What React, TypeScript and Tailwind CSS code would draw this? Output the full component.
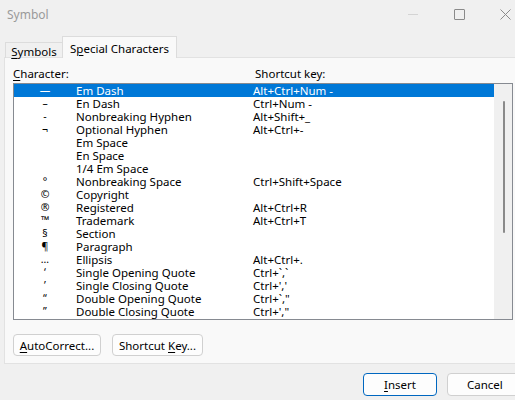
import React from 'react';

const rows: [string, string, string][] = [
    ['—', 'Em Dash', 'Alt+Ctrl+Num -'],
    ['–', 'En Dash', 'Ctrl+Num -'],
    ['-', 'Nonbreaking Hyphen', 'Alt+Shift+_'],
    ['¬', 'Optional Hyphen', 'Alt+Ctrl+-'],
    ['', 'Em Space', ''],
    ['', 'En Space', ''],
    ['', '1/4 Em Space', ''],
    ['°', 'Nonbreaking Space', 'Ctrl+Shift+Space'],
    ['©', 'Copyright', ''],
    ['®', 'Registered', 'Alt+Ctrl+R'],
    ['™', 'Trademark', 'Alt+Ctrl+T'],
    ['§', 'Section', ''],
    ['¶', 'Paragraph', ''],
    ['…', 'Ellipsis', 'Alt+Ctrl+.'],
    ['‘', 'Single Opening Quote', 'Ctrl+`,`'],
    ['’', 'Single Closing Quote', "Ctrl+','"],
    ['“', 'Double Opening Quote', 'Ctrl+`,"'],
    ['”', 'Double Closing Quote', "Ctrl+',\""],
];

const App = () => {
    return (
        <div className="w-[515px] h-[400px] overflow-hidden bg-[#f0f0f0] font-['Noto_Sans',sans-serif] text-[11.5px] leading-[13px] text-black select-none">
            {/* title bar */}
            <div className="h-[32px] flex items-center pl-[7px]">
                <span className="text-[#9a9a9a] text-[12px] -mt-[3px]">Symbol</span>
                <div className="ml-auto -mr-[13px] flex items-center -mt-[3px]">
                    <div className="w-[46px] flex justify-center">
                        <div className="w-[10px] h-px bg-[#d4d4d4]" />
                    </div>
                    <div className="w-[46px] flex justify-center">
                        <div className="w-[11px] h-[11px] border border-[#8a8a8a] rounded-[1px]" />
                    </div>
                    <div className="w-[46px] flex justify-center">
                        <svg width="11" height="11" viewBox="0 0 11 11" className="stroke-[#8a8a8a]">
                            <path d="M0.5 0.5L10.5 10.5M10.5 0.5L0.5 10.5" strokeWidth="1" />
                        </svg>
                    </div>
                </div>
            </div>

            {/* tabs */}
            <div className="h-[26px] flex items-end pl-[5px] relative z-10">
                <div className="h-[16px] w-[58px] border border-b-0 border-[#dcdcdc] flex items-center justify-center pt-px">
                    <span><span className="underline underline-offset-2">S</span>ymbols</span>
                </div>
                <div className="h-[22px] w-[115px] -ml-px border border-b-0 border-[#dcdcdc] bg-[#f9f9f9] flex items-center justify-center pt-[2px]">
                    <span>S<span className="underline underline-offset-2">p</span>ecial Characters</span>
                </div>
            </div>

            {/* panel */}
            <div className="ml-[4px] w-[530px] h-[307px] -mt-px border border-[#e2e2e2] bg-[#f9f9f9] pl-[8px] pt-[8px]">
                <div className="flex h-[14px] items-center w-[500px]">
                    <span className="w-[242px]"><span className="underline underline-offset-2">C</span>haracter:</span>
                    <span>Shortcut key:</span>
                </div>
                <div className="mt-[3px] w-[500px] h-[237px] border border-[#868a91] bg-white flex">
                    <div className="flex-1 flex flex-col">
                        {rows.map(([sym, name, key], i) => (
                            <div
                                key={name}
                                className={`h-[13px] flex items-center ${i === 0 ? 'bg-[#0078d7] text-white' : ''}`}
                            >
                                <span className="w-[62px] text-center text-[10.5px]">{sym}</span>
                                <span className="w-[177px] whitespace-nowrap">{name}</span>
                                <span className="whitespace-nowrap">{key}</span>
                            </div>
                        ))}
                    </div>
                    <div className="w-[18px] bg-[#f0f0f0] flex justify-center pt-[17px]">
                        <div className="w-[2px] h-[132px] bg-[#8a8a8a] rounded-full ml-[1px]" />
                    </div>
                </div>
                <div className="mt-[14px] flex gap-[11px]">
                    <button className="w-[88px] h-[22px] border border-[#d0d0d0] rounded-[4px] bg-[#fdfdfd] flex items-center justify-center">
                        <span><span className="underline underline-offset-2">A</span>utoCorrect...</span>
                    </button>
                    <button className="w-[91px] h-[22px] border border-[#d0d0d0] rounded-[4px] bg-[#fdfdfd] flex items-center justify-center">
                        <span>Shortcut <span className="underline underline-offset-2">K</span>ey...</span>
                    </button>
                </div>
            </div>

            {/* footer */}
            <div className="flex pl-[363px] pt-[9px] gap-[10px]">
                <button className="shrink-0 w-[74px] h-[23px] border border-[#0067c0] rounded-[4px] bg-[#fdfdfd] flex items-center justify-center">
                    <span><span className="underline underline-offset-2">I</span>nsert</span>
                </button>
                <button className="shrink-0 w-[80px] h-[23px] border border-[#d0d0d0] rounded-[4px] bg-[#fdfdfd] flex items-center justify-start pl-[19px]">
                    <span>Cancel</span>
                </button>
            </div>
        </div>
    );
};

export default App;
